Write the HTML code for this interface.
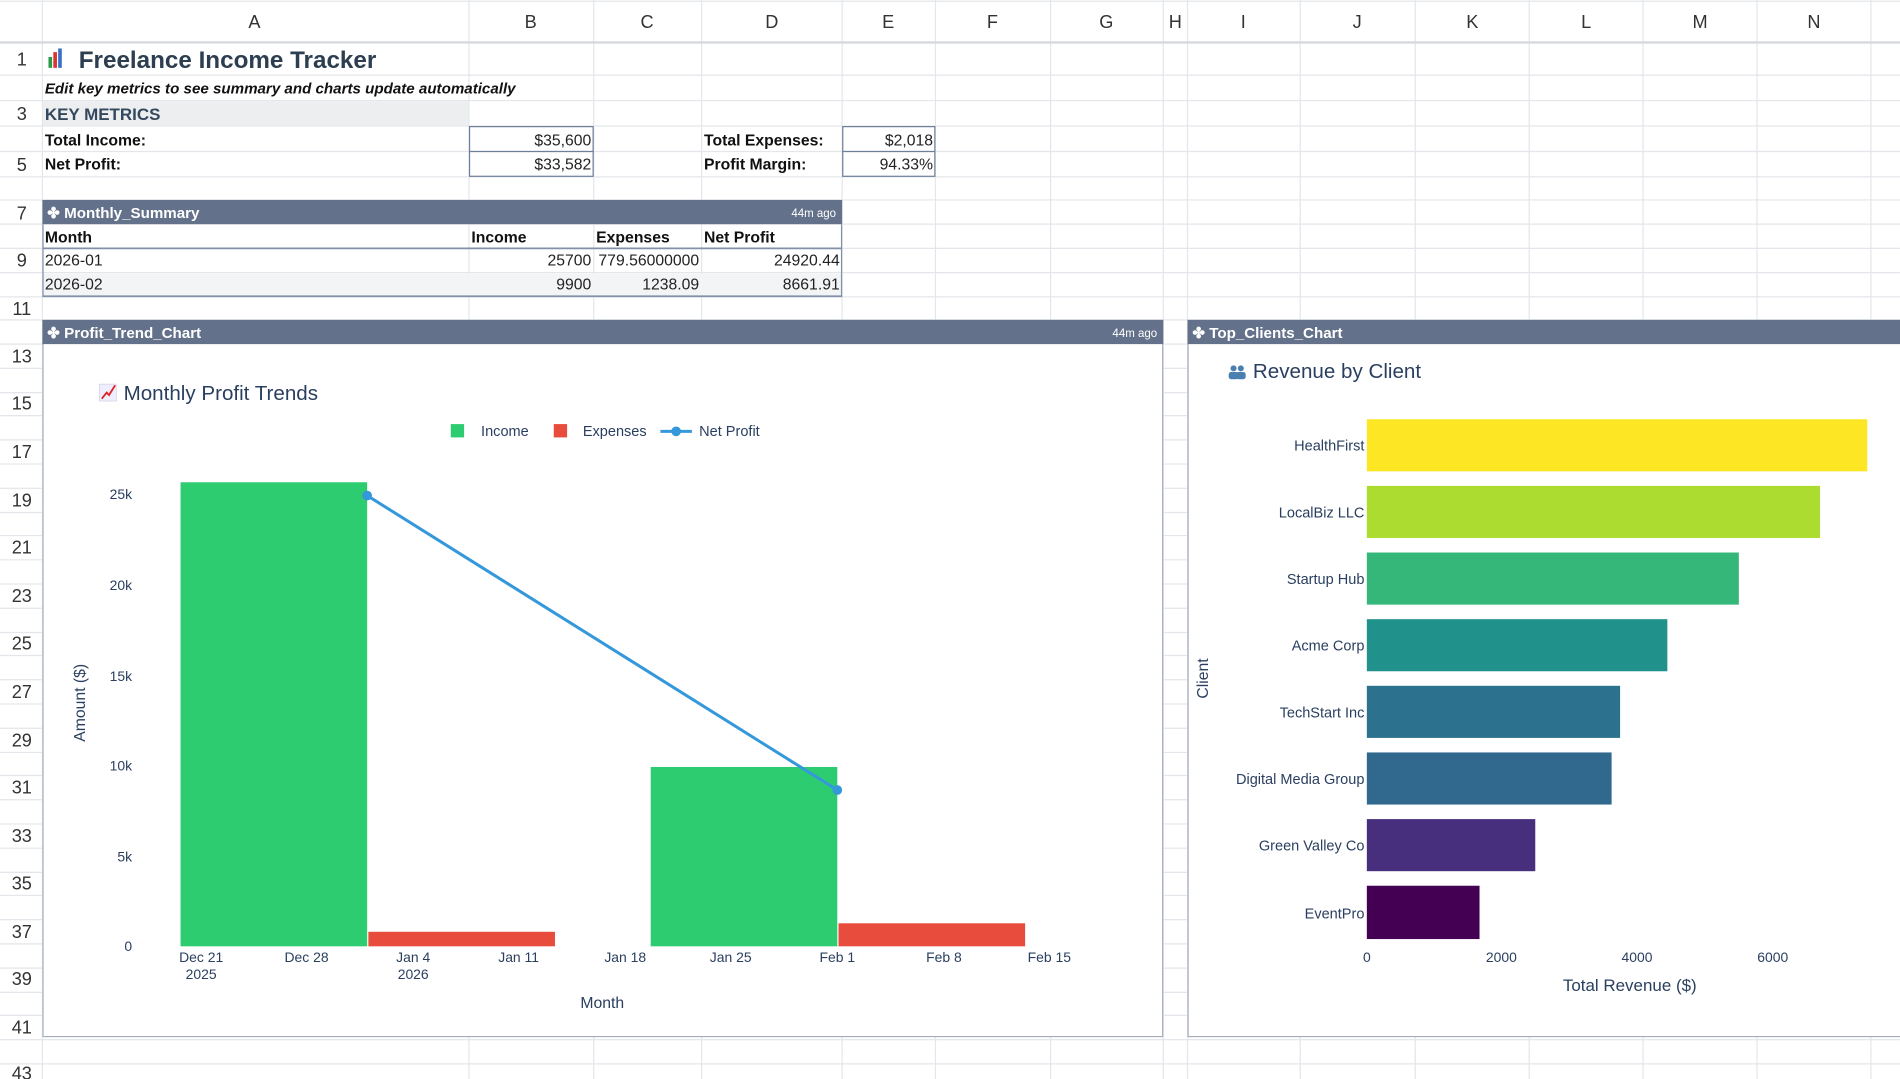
<!DOCTYPE html>
<html><head><meta charset="utf-8"><style>
html,body{margin:0;padding:0;background:#fff;overflow:hidden;width:1900px;height:1079px}
svg{display:block}
text{font-family:"Liberation Sans",sans-serif}
</style></head><body>
<svg width="1900" height="1079" viewBox="0 0 1568 890.5" preserveAspectRatio="none" xmlns="http://www.w3.org/2000/svg">
<rect width="1568" height="891" fill="#fff"/>
<!-- grid verticals -->
<g stroke="#e3e6ea" stroke-width="1">
<line x1="35" y1="0" x2="35" y2="891"/><line x1="387" y1="0" x2="387" y2="891"/><line x1="490" y1="0" x2="490" y2="891"/><line x1="579" y1="0" x2="579" y2="891"/><line x1="695" y1="0" x2="695" y2="891"/><line x1="772" y1="0" x2="772" y2="891"/><line x1="867" y1="0" x2="867" y2="891"/><line x1="960" y1="0" x2="960" y2="891"/><line x1="980" y1="0" x2="980" y2="891"/><line x1="1073" y1="0" x2="1073" y2="891"/><line x1="1168" y1="0" x2="1168" y2="891"/><line x1="1262" y1="0" x2="1262" y2="891"/><line x1="1356" y1="0" x2="1356" y2="891"/><line x1="1450" y1="0" x2="1450" y2="891"/><line x1="1544" y1="0" x2="1544" y2="891"/>
</g>
<g stroke="#e3e6ea" stroke-width="1">
<line x1="0" y1="62" x2="1568" y2="62"/><line x1="0" y1="83" x2="1568" y2="83"/><line x1="0" y1="104" x2="1568" y2="104"/><line x1="0" y1="125" x2="1568" y2="125"/><line x1="0" y1="146" x2="1568" y2="146"/><line x1="0" y1="165" x2="1568" y2="165"/><line x1="0" y1="185" x2="1568" y2="185"/><line x1="0" y1="205" x2="1568" y2="205"/><line x1="0" y1="225" x2="1568" y2="225"/><line x1="0" y1="245" x2="1568" y2="245"/><line x1="0" y1="264" x2="1568" y2="264"/>
<line x1="0" y1="284" x2="1568" y2="284"/><line x1="0" y1="304" x2="1568" y2="304"/><line x1="0" y1="324" x2="1568" y2="324"/><line x1="0" y1="343" x2="1568" y2="343"/><line x1="0" y1="363" x2="1568" y2="363"/><line x1="0" y1="383" x2="1568" y2="383"/><line x1="0" y1="403" x2="1568" y2="403"/><line x1="0" y1="423" x2="1568" y2="423"/><line x1="0" y1="442" x2="1568" y2="442"/><line x1="0" y1="462" x2="1568" y2="462"/><line x1="0" y1="482" x2="1568" y2="482"/><line x1="0" y1="502" x2="1568" y2="502"/><line x1="0" y1="522" x2="1568" y2="522"/><line x1="0" y1="541" x2="1568" y2="541"/><line x1="0" y1="561" x2="1568" y2="561"/><line x1="0" y1="581" x2="1568" y2="581"/><line x1="0" y1="601" x2="1568" y2="601"/><line x1="0" y1="621" x2="1568" y2="621"/><line x1="0" y1="640" x2="1568" y2="640"/><line x1="0" y1="660" x2="1568" y2="660"/><line x1="0" y1="680" x2="1568" y2="680"/><line x1="0" y1="700" x2="1568" y2="700"/><line x1="0" y1="720" x2="1568" y2="720"/><line x1="0" y1="739" x2="1568" y2="739"/><line x1="0" y1="759" x2="1568" y2="759"/><line x1="0" y1="779" x2="1568" y2="779"/><line x1="0" y1="799" x2="1568" y2="799"/><line x1="0" y1="819" x2="1568" y2="819"/><line x1="0" y1="838" x2="1568" y2="838"/><line x1="0" y1="858" x2="1568" y2="858"/><line x1="0" y1="878" x2="1568" y2="878"/>
</g>
<line x1="0" y1="35" x2="1568" y2="35" stroke="#d5d8dd" stroke-width="2"/>
<line x1="0" y1="1" x2="1568" y2="1" stroke="#e3e6ea"/>
<!-- headers -->
<g font-size="15" fill="#333" text-anchor="middle">
<text x="210" y="23">A</text><text x="438" y="23">B</text><text x="534" y="23">C</text><text x="637" y="23">D</text><text x="733" y="23">E</text><text x="819" y="23">F</text><text x="913" y="23">G</text><text x="970" y="23">H</text><text x="1026" y="23">I</text><text x="1120" y="23">J</text><text x="1215" y="23">K</text><text x="1309" y="23">L</text><text x="1403" y="23">M</text><text x="1497" y="23">N</text>
</g>
<g font-size="15" fill="#333" text-anchor="middle">
<text x="18" y="54">1</text><text x="18" y="99">3</text><text x="18" y="141">5</text><text x="18" y="181">7</text><text x="18" y="220">9</text><text x="18" y="260">11</text><text x="18" y="299">13</text><text x="18" y="338">15</text><text x="18" y="378">17</text><text x="18" y="418">19</text><text x="18" y="457">21</text><text x="18" y="497">23</text><text x="18" y="536">25</text><text x="18" y="576">27</text><text x="18" y="616">29</text><text x="18" y="655">31</text><text x="18" y="695">33</text><text x="18" y="734">35</text><text x="18" y="774">37</text><text x="18" y="813">39</text><text x="18" y="853">41</text><text x="18" y="891">43</text>
</g>
<!-- title -->
<rect x="36" y="36" width="350" height="25" fill="#fff"/>
<rect x="40" y="47" width="3" height="9" fill="#2a9d4a"/><rect x="44" y="43" width="3" height="13" fill="#d33"/><rect x="48" y="40" width="3" height="16" fill="#3a6fc8"/>
<text x="65" y="56" font-size="20" font-weight="bold" fill="#2c3e50">Freelance Income Tracker</text>
<text x="37" y="77" font-size="12.5" font-weight="bold" font-style="italic" fill="#111">Edit key metrics to see summary and charts update automatically</text>
<rect x="35.5" y="83.5" width="351" height="20" fill="#eceef0"/>
<text x="37" y="99" font-size="14" font-weight="bold" fill="#34495e">KEY METRICS</text>
<g font-size="13" font-weight="bold" fill="#111">
<text x="37" y="120">Total Income:</text><text x="37" y="140">Net Profit:</text>
<text x="581" y="120">Total Expenses:</text><text x="581" y="140">Profit Margin:</text>
</g>
<g fill="none" stroke="#6e7f99"><rect x="387.5" y="104.5" width="102" height="41"/><line x1="387" y1="125" x2="490" y2="125"/><rect x="695.5" y="104.5" width="76" height="41"/><line x1="695" y1="125" x2="772" y2="125"/></g>
<g font-size="13" fill="#222" text-anchor="end">
<text x="488" y="120">$35,600</text><text x="488" y="140">$33,582</text><text x="770" y="120">$2,018</text><text x="770" y="140">94.33%</text>
</g>
<!-- table -->
<rect x="35" y="165" width="660" height="20" fill="#64718a"/>
<text x="39" y="180" font-size="12.5" font-weight="bold" fill="#fff">✤ Monthly_Summary</text>
<text x="690" y="179" font-size="9.5" fill="#fff" text-anchor="end">44m ago</text>
<rect x="35.5" y="226" width="659" height="19" fill="#f3f4f6"/>
<g fill="none" stroke="#8190a8"><line x1="35.5" y1="185" x2="35.5" y2="245"/><line x1="694.5" y1="185" x2="694.5" y2="245"/><line x1="35" y1="205" x2="695" y2="205" stroke-width="1.5"/><line x1="35" y1="244.5" x2="695" y2="244.5" stroke-width="1.5"/></g>
<g font-size="13" font-weight="bold" fill="#111"><text x="37" y="200">Month</text><text x="389" y="200">Income</text><text x="492" y="200">Expenses</text><text x="581" y="200">Net Profit</text></g>
<g font-size="13" fill="#222"><text x="37" y="219">2026-01</text><text x="37" y="239">2026-02</text></g>
<g font-size="13" fill="#222" text-anchor="end"><text x="488" y="219">25700</text><text x="488" y="239">9900</text><text x="577" y="219">779.56000000</text><text x="577" y="239">1238.09</text><text x="693" y="219">24920.44</text><text x="693" y="239">8661.91</text></g>
<!-- left chart -->
<rect x="35.5" y="264.5" width="924" height="591" fill="#fff" stroke="#a7afbd"/>
<rect x="35" y="264" width="925" height="20" fill="#64718a"/>
<text x="39" y="279" font-size="12.5" font-weight="bold" fill="#fff">✤ Profit_Trend_Chart</text>
<text x="955" y="278" font-size="9.5" fill="#fff" text-anchor="end">44m ago</text>
<rect x="82" y="317" width="14" height="14" fill="#eef" stroke="#ccd" stroke-width="0.5"/><polyline points="84,329 88,324 90,326 95,318" fill="none" stroke="#d22" stroke-width="1.5"/>
<text x="102" y="330" font-size="17" fill="#2a3f5f">Monthly Profit Trends</text>
<rect x="372" y="350" width="11" height="11" fill="#2ecc71"/><text x="397" y="360" font-size="12" fill="#2a3f5f">Income</text>
<rect x="457" y="350" width="11" height="11" fill="#e74c3c"/><text x="481" y="360" font-size="12" fill="#2a3f5f">Expenses</text>
<line x1="545" y1="356" x2="571" y2="356" stroke="#3498db" stroke-width="2.5"/><circle cx="558" cy="356" r="4" fill="#3498db"/><text x="577" y="360" font-size="12" fill="#2a3f5f">Net Profit</text>
<g font-size="11.5" fill="#2a3f5f" text-anchor="end"><text x="109" y="412">25k</text><text x="109" y="487">20k</text><text x="109" y="562">15k</text><text x="109" y="636">10k</text><text x="109" y="711">5k</text><text x="109" y="785">0</text></g>
<text transform="translate(70,580) rotate(-90)" font-size="13" fill="#2a3f5f" text-anchor="middle">Amount ($)</text>
<rect x="149" y="398" width="154" height="383" fill="#2ecc71"/>
<rect x="304" y="769" width="154" height="12" fill="#e74c3c"/>
<rect x="537" y="633" width="154" height="148" fill="#2ecc71"/>
<rect x="692" y="762" width="154" height="19" fill="#e74c3c"/>
<line x1="303" y1="409" x2="691" y2="652" stroke="#3498db" stroke-width="2.5"/>
<circle cx="303" cy="409" r="4" fill="#3498db"/><circle cx="691" cy="652" r="4" fill="#3498db"/>
<g font-size="11.5" fill="#2a3f5f" text-anchor="middle"><text x="166" y="794">Dec 21</text><text x="166" y="808">2025</text><text x="253" y="794">Dec 28</text><text x="341" y="794">Jan 4</text><text x="341" y="808">2026</text><text x="428" y="794">Jan 11</text><text x="516" y="794">Jan 18</text><text x="603" y="794">Jan 25</text><text x="691" y="794">Feb 1</text><text x="779" y="794">Feb 8</text><text x="866" y="794">Feb 15</text></g>
<text x="497" y="832" font-size="13" fill="#2a3f5f" text-anchor="middle">Month</text>
<!-- right chart -->
<rect x="980.5" y="264.5" width="590" height="591" fill="#fff" stroke="#a7afbd"/>
<rect x="980" y="264" width="588" height="20" fill="#64718a"/>
<text x="984" y="279" font-size="12.5" font-weight="bold" fill="#fff">✤ Top_Clients_Chart</text>
<circle cx="1018" cy="304" r="2.5" fill="#4a7fb0"/><circle cx="1024" cy="304" r="2.5" fill="#4a7fb0"/><rect x="1014" y="307" width="8" height="6" rx="2" fill="#4a7fb0"/><rect x="1020" y="307" width="8" height="6" rx="2" fill="#4a7fb0"/>
<text x="1034" y="312" font-size="17" fill="#2a3f5f">Revenue by Client</text>
<rect x="1128" y="346" width="413" height="43" fill="#fde725"/>
<rect x="1128" y="401" width="374" height="43" fill="#addc30"/>
<rect x="1128" y="456" width="307" height="43" fill="#35b779"/>
<rect x="1128" y="511" width="248" height="43" fill="#21918c"/>
<rect x="1128" y="566" width="209" height="43" fill="#2c728e"/>
<rect x="1128" y="621" width="202" height="43" fill="#31688e"/>
<rect x="1128" y="676" width="139" height="43" fill="#472f7d"/>
<rect x="1128" y="731" width="93" height="44" fill="#440154"/>
<g font-size="12" fill="#2a3f5f" text-anchor="end"><text x="1126" y="372">HealthFirst</text><text x="1126" y="427">LocalBiz LLC</text><text x="1126" y="482">Startup Hub</text><text x="1126" y="537">Acme Corp</text><text x="1126" y="592">TechStart Inc</text><text x="1126" y="647">Digital Media Group</text><text x="1126" y="702">Green Valley Co</text><text x="1126" y="758">EventPro</text></g>
<text transform="translate(997,560) rotate(-90)" font-size="13" fill="#2a3f5f" text-anchor="middle">Client</text>
<g font-size="11.5" fill="#2a3f5f" text-anchor="middle"><text x="1128" y="794">0</text><text x="1239" y="794">2000</text><text x="1351" y="794">4000</text><text x="1463" y="794">6000</text></g>
<text x="1345" y="818" font-size="14" fill="#2a3f5f" text-anchor="middle">Total Revenue ($)</text>
</svg>
</body></html>
